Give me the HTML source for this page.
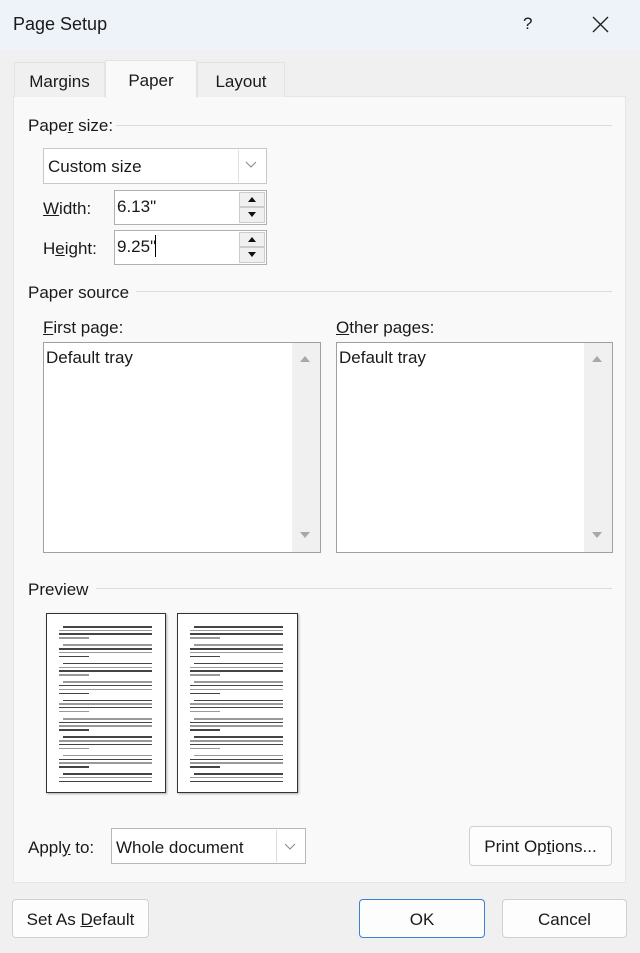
<!DOCTYPE html>
<html><head><meta charset="utf-8"><style>
*{box-sizing:border-box;margin:0;padding:0}
body{width:640px;height:953px;background:#f0f0f0;font-family:"Segoe UI","Liberation Sans",sans-serif;font-size:17px;color:#1a1a1a;position:relative;overflow:hidden}
.a{position:absolute}
.t{margin-top:1px}
.title{left:0;top:0;width:640px;height:50px;background:#eef3f9}
.panel{left:13px;top:96px;width:613px;height:787px;background:#f9f9f9;border:1px solid #e5e5e5}
.tab{top:62px;height:35px;background:#f0f0f0;border:1px solid #e3e3e3;border-bottom:none;text-align:center;line-height:37px}
.line{height:1px;background:#dcdcdc}
.box{background:#fff;border:1px solid #a0a0a0}
.btn{background:#fdfdfd;border:1px solid #d0d0d0;border-radius:4px;text-align:center}
.spin{background:#f0f0f0;border:1px solid #ccc}
u{text-decoration:underline}
.pg{background:#fff;border:1px solid #333;box-shadow:1px 1px 2px rgba(0,0,0,.3)}
.pl{position:absolute;height:2px}
</style></head><body>
<div class="a title"></div>
<div class="a" style="left:13px;top:14px;font-size:18px">Page Setup</div>
<div class="a" style="left:523px;top:14px;font-size:17px">?</div>
<svg class="a" style="left:592px;top:16px" width="17" height="17"><path d="M1 1L16 16M16 1L1 16" stroke="#222" stroke-width="1.4"/></svg>

<div class="a panel"></div>
<div class="a tab" style="left:14px;width:91px">Margins</div>
<div class="a tab" style="left:197px;width:88px">Layout</div>
<div class="a" style="left:105px;top:60px;width:92px;height:38px;background:#f9f9f9;border:1px solid #e3e3e3;border-bottom:none;text-align:center;line-height:40px">Paper</div>

<div class="a" style="left:28px;top:116px">Pape<u>r</u> size:</div>
<div class="a line" style="left:116px;top:125px;width:496px"></div>
<div class="a box" style="left:43px;top:148px;width:224px;height:36px;border-color:#c8c8c8"></div>
<div class="a" style="left:48px;top:157px">Custom size</div>
<div class="a" style="left:238px;top:150px;width:27px;height:32px;background:#fff;border-left:1px solid #e0e0e0"></div>
<svg class="a" style="left:245px;top:161px" width="12" height="8"><path d="M1 1L6 6L11 1" stroke="#888" fill="none"/></svg>

<div class="a" style="left:43px;top:199px"><u>W</u>idth:</div>
<div class="a box" style="left:114px;top:190px;width:153px;height:35px;border-color:#b0b0b0"></div>
<div class="a" style="left:117px;top:197px">6.13"</div>
<div class="a" style="left:43px;top:239px">H<u>e</u>ight:</div>
<div class="a box" style="left:114px;top:230px;width:153px;height:35px;border-color:#b0b0b0"></div>
<div class="a" style="left:117px;top:237px">9.25"</div>
<div class="a" style="left:155px;top:235px;width:1px;height:22px;background:#000"></div>
<div class="a spin" style="left:239px;top:192px;width:26px;height:15px"></div>
<div class="a spin" style="left:239px;top:207px;width:26px;height:16px"></div>
<div class="a spin" style="left:239px;top:232px;width:26px;height:15px"></div>
<div class="a spin" style="left:239px;top:247px;width:26px;height:16px"></div>
<svg class="a" style="left:239px;top:192px" width="26" height="72"><path d="M9 10L13 5L17 10Z M9 20L13 25L17 20Z M9 50L13 45L17 50Z M9 60L13 65L17 60Z" fill="#111"/></svg>

<div class="a" style="left:28px;top:283px">Paper source</div>
<div class="a line" style="left:136px;top:291px;width:476px"></div>
<div class="a" style="left:43px;top:318px"><u>F</u>irst page:</div>
<div class="a" style="left:336px;top:318px"><u>O</u>ther pages:</div>
<div class="a box" style="left:43px;top:342px;width:278px;height:211px"></div>
<div class="a" style="left:292px;top:343px;width:28px;height:209px;background:#f0f0f0"></div>
<div class="a" style="left:46px;top:348px">Default tray</div>
<div class="a box" style="left:336px;top:342px;width:277px;height:211px"></div>
<div class="a" style="left:584px;top:343px;width:28px;height:209px;background:#f0f0f0"></div>
<div class="a" style="left:339px;top:348px">Default tray</div>
<svg class="a" style="left:299px;top:354px" width="14" height="190"><path d="M1 8L6 2L11 8Z M1 178L6 184L11 178Z" fill="#a8a8a8"/></svg>
<svg class="a" style="left:591px;top:354px" width="14" height="190"><path d="M1 8L6 2L11 8Z M1 178L6 184L11 178Z" fill="#a8a8a8"/></svg>

<div class="a" style="left:28px;top:580px">Preview</div>
<div class="a line" style="left:96px;top:588px;width:516px"></div>
<div class="a pg" id="p1" style="left:46px;top:613px;width:120px;height:180px"></div>
<div class="a pg" id="p2" style="left:177px;top:613px;width:121px;height:180px"></div>

<div class="a" style="left:28px;top:838px">Appl<u>y</u> to:</div>
<div class="a box" style="left:111px;top:828px;width:195px;height:36px;border-color:#b8b8b8"></div>
<div class="a" style="left:116px;top:838px">Whole document</div>
<div class="a" style="left:276px;top:830px;width:28px;height:32px;border-left:1px solid #ddd;background:#fff"></div>
<svg class="a" style="left:284px;top:843px" width="12" height="8"><path d="M1 1L6 6L11 1" stroke="#888" fill="none"/></svg>
<div class="a btn" style="left:469px;top:826px;width:143px;height:40px;line-height:40px">Print Op<u>t</u>ions...</div>

<div class="a btn" style="left:12px;top:899px;width:137px;height:39px;line-height:39px">Set As <u>D</u>efault</div>
<div class="a btn" style="left:359px;top:899px;width:126px;height:39px;line-height:39px;border-color:#3d7fd0">OK</div>
<div class="a btn" style="left:502px;top:899px;width:125px;height:39px;line-height:39px">Cancel</div>
<script>
['p1','p2'].forEach(function(id){var p=document.getElementById(id);var h='';
for(var i=0;i<9;i++){var y=12+i*18.4;var ys=[y,y+3.7,y+7.3,y+11.3];
var ls=[[16,105],[12,105],[12,105],[12,42]];var n=i==8?3:4;
for(var j=0;j<n;j++){var c=(i+j)%2?'#999':'#444';
h+='<div class="pl" style="left:'+ls[j][0]+'px;width:'+(ls[j][1]-ls[j][0])+'px;top:'+ys[j].toFixed(1)+'px;height:1.5px;background:'+c+'"></div>';}}
p.innerHTML=h;});
</script>
</body></html>
